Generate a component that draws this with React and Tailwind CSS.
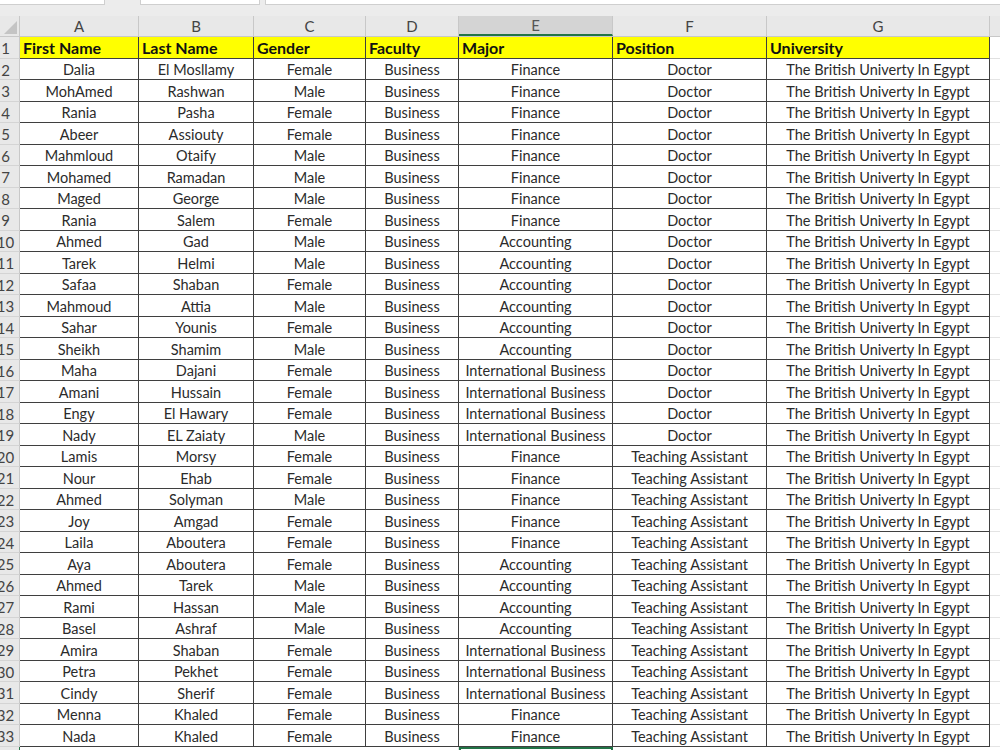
import React from 'react';

const columns = [
  { key: 'A', width: 'w-[119px]', label: 'First Name' },
  { key: 'B', width: 'w-[115px]', label: 'Last Name' },
  { key: 'C', width: 'w-[112px]', label: 'Gender' },
  { key: 'D', width: 'w-[93px]', label: 'Faculty' },
  { key: 'E', width: 'w-[154px]', label: 'Major' },
  { key: 'F', width: 'w-[154px]', label: 'Position' },
  { key: 'G', width: 'w-[223px]', label: 'University' },
];

const IB = 'International Business';
const TA = 'Teaching Assistant';

// first, last, gender, major, position
const people = [
  ['Dalia', 'El Mosllamy', 'Female', 'Finance', 'Doctor'],
  ['MohAmed', 'Rashwan', 'Male', 'Finance', 'Doctor'],
  ['Rania', 'Pasha', 'Female', 'Finance', 'Doctor'],
  ['Abeer', 'Assiouty', 'Female', 'Finance', 'Doctor'],
  ['Mahmloud', 'Otaify', 'Male', 'Finance', 'Doctor'],
  ['Mohamed', 'Ramadan', 'Male', 'Finance', 'Doctor'],
  ['Maged', 'George', 'Male', 'Finance', 'Doctor'],
  ['Rania', 'Salem', 'Female', 'Finance', 'Doctor'],
  ['Ahmed', 'Gad', 'Male', 'Accounting', 'Doctor'],
  ['Tarek', 'Helmi', 'Male', 'Accounting', 'Doctor'],
  ['Safaa', 'Shaban', 'Female', 'Accounting', 'Doctor'],
  ['Mahmoud', 'Attia', 'Male', 'Accounting', 'Doctor'],
  ['Sahar', 'Younis', 'Female', 'Accounting', 'Doctor'],
  ['Sheikh', 'Shamim', 'Male', 'Accounting', 'Doctor'],
  ['Maha', 'Dajani', 'Female', IB, 'Doctor'],
  ['Amani', 'Hussain', 'Female', IB, 'Doctor'],
  ['Engy', 'El Hawary', 'Female', IB, 'Doctor'],
  ['Nady', 'EL Zaiaty', 'Male', IB, 'Doctor'],
  ['Lamis', 'Morsy', 'Female', 'Finance', TA],
  ['Nour', 'Ehab', 'Female', 'Finance', TA],
  ['Ahmed', 'Solyman', 'Male', 'Finance', TA],
  ['Joy', 'Amgad', 'Female', 'Finance', TA],
  ['Laila', 'Aboutera', 'Female', 'Finance', TA],
  ['Aya', 'Aboutera', 'Female', 'Accounting', TA],
  ['Ahmed', 'Tarek', 'Male', 'Accounting', TA],
  ['Rami', 'Hassan', 'Male', 'Accounting', TA],
  ['Basel', 'Ashraf', 'Male', 'Accounting', TA],
  ['Amira', 'Shaban', 'Female', IB, TA],
  ['Petra', 'Pekhet', 'Female', IB, TA],
  ['Cindy', 'Sherif', 'Female', IB, TA],
  ['Menna', 'Khaled', 'Female', 'Finance', TA],
  ['Nada', 'Khaled', 'Female', 'Finance', TA],
];

const RowHeader = ({ children, selected }) => (
  <div
    className={`w-[28px] shrink-0 flex items-center justify-center pt-[2px] text-[15px] text-[#444] bg-[#e8e8e8] border-b border-[#d4d4d4] border-r ${
      selected ? 'border-r-[#217346]' : 'border-r-[#c8c8c8]'
    }`}
  >
    {children}
  </div>
);

const App = () => {
  return (
    <div
      className="w-[1000px] h-[750px] overflow-hidden bg-white"
      style={{ fontFamily: 'Lato, "Open Sans", sans-serif' }}
    >
      {/* bottom edge of the name box / formula bar */}
      <div className="h-[16px] bg-[#ececec] flex items-start gap-[35px]">
        <div className="w-[108px] h-[5px] bg-white border-b border-r border-[#cfcfcf]" />
        <div className="flex gap-[5px]">
          <div className="w-[120px] h-[5px] bg-white border-b border-x border-[#cfcfcf]" />
          <div className="w-[735px] h-[5px] bg-white border-b border-l border-[#cfcfcf]" />
        </div>
      </div>

      <div className="-ml-[8px]">
        {/* column letters */}
        <div className="flex h-[21px] bg-[#e8e8e8] border-b border-[#c8c8c8]">
          <div className="w-[28px] shrink-0 relative border-r border-[#c8c8c8]">
            <div className="absolute right-[2px] bottom-[2px] w-0 h-0 border-l-[13px] border-l-transparent border-b-[13px] border-b-[#c4c4c4]" />
          </div>
          {columns.map((c) => (
            <div
              key={c.key}
              className={`${c.width} shrink-0 flex items-center justify-center pt-[1px] text-[15px] border-r border-[#c8c8c8] ${
                c.key === 'E'
                  ? 'bg-[#d4d4d4] text-[#555] border-b-2 border-b-[#217346]'
                  : 'text-[#444]'
              }`}
            >
              {c.key}
            </div>
          ))}
          <div className="flex-1" />
        </div>

        {/* row 1: titles */}
        <div className="flex h-[21.5px]">
          <RowHeader>1</RowHeader>
          {columns.map((c) => (
            <div
              key={c.key}
              className={`${c.width} shrink-0 flex items-center pt-[2px] px-[3px] bg-[#ffff00] font-bold text-[16px] text-[#111] border-r border-b border-[#3f3f3f] whitespace-nowrap`}
            >
              {c.label}
            </div>
          ))}
          <div className="flex-1 border-b border-[#e0e0e0]" />
        </div>

        {people.map((p, i) => {
          const cells = [p[0], p[1], p[2], 'Business', p[3], p[4], 'The British Univerty In Egypt'];
          return (
            <div key={i} className="flex h-[21.5px]">
              <RowHeader>{i + 2}</RowHeader>
              {cells.map((text, j) => (
                <div
                  key={j}
                  className={`${columns[j].width} shrink-0 flex items-center justify-center pt-[3px] text-[14.5px] text-[#2b2b2b] border-r border-b border-[#3f3f3f] whitespace-nowrap overflow-hidden`}
                >
                  {text}
                </div>
              ))}
              <div className="flex-1 border-b border-[#e4e4e4]" />
            </div>
          );
        })}

        {/* row 34, cut off by the window */}
        <div className="flex h-[21.5px]">
          <RowHeader selected>34</RowHeader>
          <div className="w-[439px] shrink-0 border-r border-[#e0e0e0]" />
          <div className="w-[154px] shrink-0 border-2 border-t-[#217346] border-x-[#217346] border-b-transparent" />
          <div className="flex-1" />
        </div>
      </div>
    </div>
  );
};

export default App;
